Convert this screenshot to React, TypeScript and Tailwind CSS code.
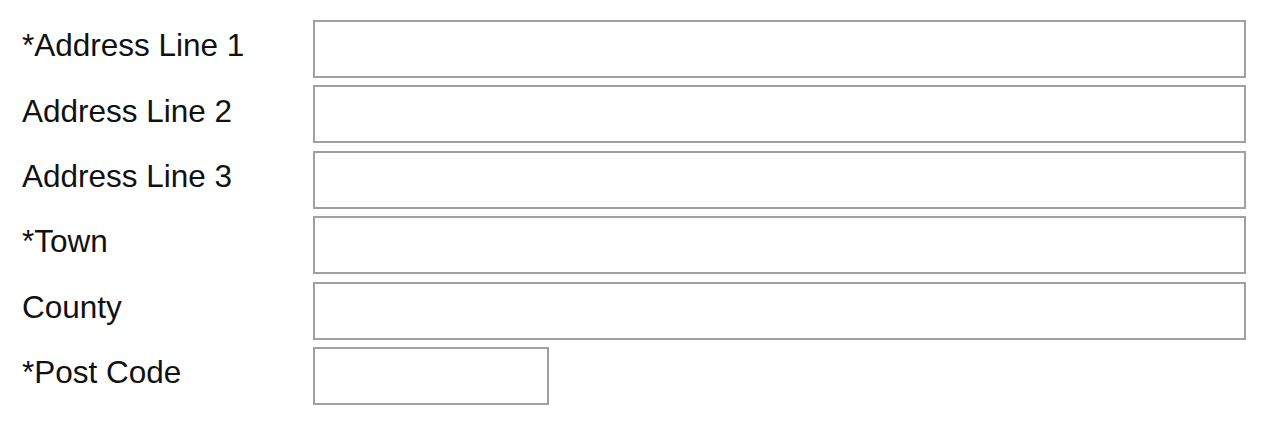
const fields = [
  { label: "*Address Line 1", wide: true },
  { label: "Address Line 2", wide: true },
  { label: "Address Line 3", wide: true },
  { label: "*Town", wide: true },
  { label: "County", wide: true },
  { label: "*Post Code", wide: false },
];

export default function App() {
  return (
    <div className="min-h-screen bg-white pt-[20px] pl-[22px] font-['Liberation_Sans',Arial,sans-serif] text-[#111111]">
      <div className="flex flex-col gap-[7.4px]">
        {fields.map((f) => (
          <div key={f.label} className="flex items-center h-[58px]">
            <label className="w-[291px] text-[31.5px] leading-none pb-[6px]">{f.label}</label>
            <input
              type="text"
              className={
                "h-[58px] bg-white border-2 border-[#a0a0a0] outline-none " +
                (f.wide ? "w-[933px]" : "w-[236px]")
              }
            />
          </div>
        ))}
      </div>
    </div>
  );
}
